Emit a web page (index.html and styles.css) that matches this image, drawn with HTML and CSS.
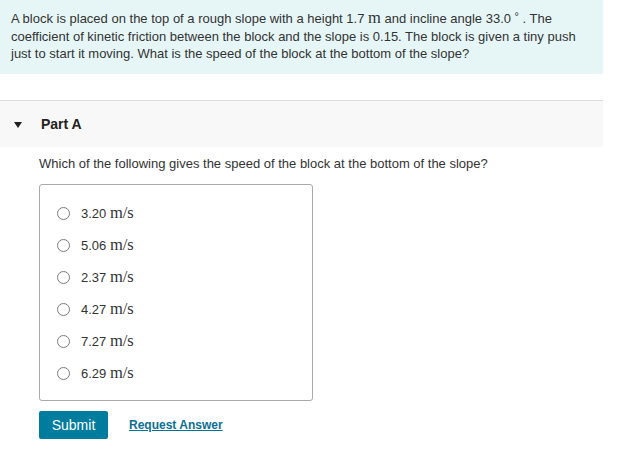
FILE: index.html
```html
<!DOCTYPE html>
<html>
<head>
<meta charset="utf-8">
<link rel="stylesheet" href="styles.css">
</head>
<body>
<div class="page">
  <div class="intro">
    A block is placed on the top of a rough slope with a height 1.7&nbsp;<span class="math">m</span>&nbsp;and incline angle 33.0&nbsp;<span class="deg">°</span>&nbsp;. The coefficient of kinetic friction between the block and the slope is 0.15. The block is given a tiny push just to start it moving. What is the speed of the block at the bottom of the slope?
  </div>
  <div class="part-head">
    <span class="tri"></span>
    <span class="part-title">Part A</span>
  </div>
  <div class="part-body">
    <p class="question">Which of the following gives the speed of the block at the bottom of the slope?</p>
    <div class="options">
      <label class="opt"><span class="radio"></span><span>3.20 <span class="math">m/s</span></span></label>
      <label class="opt"><span class="radio"></span><span>5.06 <span class="math">m/s</span></span></label>
      <label class="opt"><span class="radio"></span><span>2.37 <span class="math">m/s</span></span></label>
      <label class="opt"><span class="radio"></span><span>4.27 <span class="math">m/s</span></span></label>
      <label class="opt"><span class="radio"></span><span>7.27 <span class="math">m/s</span></span></label>
      <label class="opt"><span class="radio"></span><span>6.29 <span class="math">m/s</span></span></label>
    </div>
    <div class="actions">
      <button class="submit">Submit</button>
      <a class="link" href="#">Request Answer</a>
    </div>
  </div>
</div>
</body>
</html>
```
FILE: styles.css
```css
html, body {
  margin: 0;
  padding: 0;
  background: #ffffff;
}
body {
  font-family: "Liberation Sans", Arial, sans-serif;
  font-size: 13px;
  color: #333333;
}
.page {
  width: 603px;
}
.intro {
  background: #e6f6f7;
  padding: 8px 11px 13px 11px;
  line-height: 17.5px;
  height: 53px;
}
.math {
  font-family: "Liberation Serif", "Times New Roman", serif;
  font-size: 16.5px;
}
.deg {
  font-size: 11px;
  vertical-align: 3px;
}
.part-head {
  margin-top: 26px;
  border-top: 1px solid #dcdcdc;
  background: #f8f8f8;
  height: 46px;
  display: flex;
  align-items: center;
}
.tri {
  width: 0;
  height: 0;
  border-left: 4.5px solid transparent;
  border-right: 4.5px solid transparent;
  border-top: 6px solid #222222;
  margin-left: 14px;
  margin-right: 19px;
  margin-top: 1px;
}
.part-title {
  font-weight: bold;
  font-size: 14px;
  color: #222222;
}
.part-body {
  padding-left: 39px;
}
.question {
  margin: 8px 0 0 0;
  line-height: 17px;
}
.options {
  margin-top: 12px;
  width: 272px;
  border: 1px solid #a9a9a9;
  border-radius: 3px;
  padding: 12px 0 11px 0;
  display: flex;
  flex-direction: column;
}
.opt {
  display: flex;
  align-items: center;
  height: 32px;
  padding-left: 17px;
}
.radio {
  width: 11px;
  height: 11px;
  border: 1px solid #7a7a7a;
  border-radius: 50%;
  margin-right: 11px;
  background: #fff;
}
.actions {
  margin-top: 10px;
  display: flex;
  align-items: center;
  gap: 21px;
}
.submit {
  background: #007c9e;
  color: #ffffff;
  border: none;
  border-radius: 2px;
  font-family: "Liberation Sans", Arial, sans-serif;
  font-size: 14px;
  height: 28px;
  width: 69px;
  padding: 0;
}
.link {
  color: #0a6f96;
  font-size: 12px;
  font-weight: bold;
}
```
